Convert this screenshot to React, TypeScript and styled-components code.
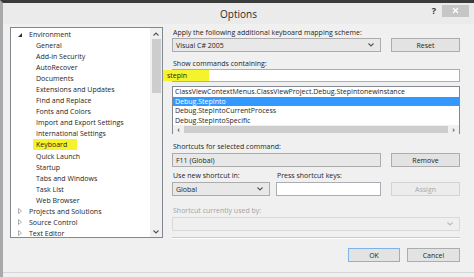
import styled, { createGlobalStyle } from "styled-components";

const GlobalStyle = createGlobalStyle`
  html, body {
    margin: 0;
    padding: 0;
    background: #8d8f91;
  }
  * {
    box-sizing: border-box;
  }
`;

const FONT = `"Open Sans", "Noto Sans", sans-serif`;

const Window = styled.div`
  width: 474px;
  height: 277px;
  display: flex;
  flex-direction: column;
  border-top: 3px solid #3b3b3b;
  border-left: 3px solid #a7a9ab;
  background: #f0f0f0;
  font-family: ${FONT};
  font-size: 7px;
  color: #1e1e1e;
  overflow: hidden;
`;

const TitleBar = styled.div`
  height: 21px;
  display: flex;
  align-items: center;
  justify-content: center;
  position: relative;
  background: #ebebeb;
`;

const Title = styled.span`
  font-size: 10px;
  color: #2b2b2b;
  margin-top: 1px;
`;

const TitleButtons = styled.div`
  position: absolute;
  right: 5px;
  top: 1px;
  display: flex;
  align-items: center;
  gap: 6px;
`;

const Help = styled.span`
  font-size: 9px;
  font-weight: 700;
  color: #333;
`;

const CloseBox = styled.div`
  width: 27px;
  height: 12px;
  background: #c6c6c6;
  display: flex;
  align-items: center;
  justify-content: center;
`;

const Body = styled.div`
  height: 249px;
  display: flex;
  padding: 3px 10px 0 7px;
  border-bottom: 1px solid #d6d6d6;
`;

const TreeBox = styled.div`
  width: 153px;
  height: 211px;
  border: 1px solid #828790;
  background: #fff;
  display: flex;
`;

const TreeList = styled.div`
  flex: 1;
  padding-top: 1px;
  overflow: hidden;
`;

const TreeRow = styled.div<{ $level: number; $mark?: boolean }>`
  height: 11.05px;
  line-height: 11px;
  display: flex;
  align-items: center;
  padding-left: ${(p) => (p.$level === 0 ? 5 : 25)}px;
  white-space: nowrap;
  span {
    padding: ${(p) => (p.$mark ? "0 10px 0 3px" : "0")};
    margin-left: ${(p) => (p.$mark ? "-3px" : "0")};
    background: ${(p) => (p.$mark ? "#f4f32c" : "transparent")};
  }
`;

const Twisty = styled.svg`
  width: 8px;
  height: 8px;
  margin-right: 5px;
  flex-shrink: 0;
`;

const VScroll = styled.div`
  width: 12px;
  background: #f0f0f0;
  display: flex;
  flex-direction: column;
  align-items: center;
`;

const ScrollArrow = styled.div`
  height: 11px;
  width: 100%;
  display: flex;
  align-items: center;
  justify-content: center;
`;

const VThumb = styled.div`
  width: 9px;
  height: 54px;
  background: #cdcdcd;
`;

const Spacer = styled.div`
  flex: 1;
`;

const Right = styled.div`
  width: 288px;
  margin-left: 9px;
  display: flex;
  flex-direction: column;
`;

const Label = styled.div<{ $top: number; $disabled?: boolean }>`
  height: 10px;
  line-height: 10px;
  margin-top: ${(p) => p.$top}px;
  padding-left: 1px;
  white-space: nowrap;
  color: ${(p) => (p.$disabled ? "#a3a3a3" : "#1e1e1e")};
`;

const Row = styled.div<{ $top?: number }>`
  display: flex;
  gap: 10px;
  margin-top: ${(p) => p.$top ?? 0}px;
  align-items: flex-start;
`;

const Combo = styled.div<{ $w?: number; $grow?: boolean; $disabled?: boolean; $top?: number }>`
  ${(p) => (p.$w ? `width: ${p.$w}px;` : "")}
  ${(p) => (p.$grow ? "flex: 1;" : "")}
  height: 14px;
  flex-shrink: 0;
  margin-top: ${(p) => p.$top ?? 0}px;
  border: 1px solid ${(p) => (p.$disabled ? "#d9d9d9" : "#acacac")};
  background: ${(p) => (p.$disabled ? "#efefef" : "#e8e8e8")};
  display: flex;
  align-items: center;
  padding-left: 3px;
  color: #1e1e1e;
`;

const ComboText = styled.span`
  flex: 1;
`;

const Chevron = styled.svg`
  width: 6px;
  height: 4px;
  margin-right: 6px;
`;

const Button = styled.div<{ $w: number; $default?: boolean; $disabled?: boolean; $top?: number }>`
  width: ${(p) => p.$w}px;
  height: 14px;
  margin-top: ${(p) => p.$top ?? 0}px;
  border: 1px solid
    ${(p) => (p.$default ? "#7eb4ea" : p.$disabled ? "#d3d3d3" : "#adadad")};
  background: ${(p) => (p.$disabled ? "#ececec" : "#e3e3e3")};
  color: ${(p) => (p.$disabled ? "#a8a8a8" : "#1e1e1e")};
  display: flex;
  align-items: center;
  justify-content: center;
`;

const TextBox = styled.div<{ $w?: number; $h?: number; $top?: number }>`
  ${(p) => (p.$w ? `width: ${p.$w}px;` : "")}
  height: ${(p) => p.$h ?? 14}px;
  margin-top: ${(p) => p.$top ?? 0}px;
  border: 1px solid #abadb3;
  background: #fff;
  display: flex;
  align-items: center;
`;

const Highlight = styled.span`
  background: #f4f32c;
  padding: 1px 22px 1px 4px;
  margin-left: -10px;
  line-height: 9px;
`;

const ListBox = styled.div`
  margin-top: 4px;
  height: 48px;
  border: 1px solid #828790;
  background: #fff;
  display: flex;
  flex-direction: column;
`;

const ListItem = styled.div<{ $selected?: boolean }>`
  height: 9.5px;
  line-height: 9.5px;
  padding-left: 2px;
  white-space: nowrap;
  background: ${(p) => (p.$selected ? "#3399ff" : "transparent")};
  color: ${(p) => (p.$selected ? "#fff" : "#1e1e1e")};
`;

const HScroll = styled.div`
  margin-top: auto;
  height: 9px;
  background: #f0f0f0;
  display: flex;
  align-items: center;
`;

const HThumb = styled.div`
  flex: 1;
  height: 7px;
  background: #cdcdcd;
`;

const HArrow = styled.div`
  width: 11px;
  text-align: center;
  font-size: 7px;
  font-weight: 700;
  color: #555;
  line-height: 9px;
`;

const ShortcutCol = styled.div<{ $w: number; $shift?: number }>`
  width: ${(p) => p.$w}px;
  margin-left: ${(p) => p.$shift ?? 0}px;
  display: flex;
  flex-direction: column;
`;

const Separator = styled.div`
  margin-top: 6px;
  height: 2px;
  border-top: 1px solid #c9c9c9;
  border-bottom: 1px solid #fff;
`;

const Footer = styled.div`
  margin-top: 9px;
  display: flex;
  justify-content: flex-end;
  gap: 7px;
`;

const tree: { label: string; level: number; mark?: boolean }[] = [
  { label: "Environment", level: 0 },
  { label: "General", level: 1 },
  { label: "Add-in Security", level: 1 },
  { label: "AutoRecover", level: 1 },
  { label: "Documents", level: 1 },
  { label: "Extensions and Updates", level: 1 },
  { label: "Find and Replace", level: 1 },
  { label: "Fonts and Colors", level: 1 },
  { label: "Import and Export Settings", level: 1 },
  { label: "International Settings", level: 1 },
  { label: "Keyboard", level: 1, mark: true },
  { label: "Quick Launch", level: 1 },
  { label: "Startup", level: 1 },
  { label: "Tabs and Windows", level: 1 },
  { label: "Task List", level: 1 },
  { label: "Web Browser", level: 1 },
  { label: "Projects and Solutions", level: 0 },
  { label: "Source Control", level: 0 },
  { label: "Text Editor", level: 0 },
];

const commands = [
  "ClassViewContextMenus.ClassViewProject.Debug.StepIntonewinstance",
  "Debug.StepInto",
  "Debug.StepIntoCurrentProcess",
  "Debug.StepIntoSpecific",
];

const Down = ({ color = "#555" }: { color?: string }) => (
  <Chevron viewBox="0 0 6 4">
    <path d="M0.5 0.5 L3 3 L5.5 0.5" fill="none" stroke={color} strokeWidth="1.1" />
  </Chevron>
);

const App = () => {
  return (
    <>
      <GlobalStyle />
      <Window>
        <TitleBar>
          <Title>Options</Title>
          <TitleButtons>
            <Help>?</Help>
            <CloseBox>
              <svg width="7" height="7" viewBox="0 0 7 7">
                <path d="M1 1 L6 6 M6 1 L1 6" stroke="#fff" strokeWidth="1.3" />
              </svg>
            </CloseBox>
          </TitleButtons>
        </TitleBar>
        <Body>
          <TreeBox>
            <TreeList>
              {tree.map((t) => (
                <TreeRow key={t.label} $level={t.level} $mark={t.mark}>
                  {t.level === 0 &&
                    (t.label === "Environment" ? (
                      <Twisty viewBox="0 0 8 8">
                        <path d="M6 2 L6 6 L2 6 Z" fill="#333" />
                      </Twisty>
                    ) : (
                      <Twisty viewBox="0 0 8 8">
                        <path d="M2.5 1.5 L5.5 4 L2.5 6.5 Z" fill="none" stroke="#a6a6a6" strokeWidth="0.9" />
                      </Twisty>
                    ))}
                  <span>{t.label}</span>
                </TreeRow>
              ))}
            </TreeList>
            <VScroll>
              <ScrollArrow>
                <svg width="6" height="4" viewBox="0 0 6 4">
                  <path d="M0.5 3.5 L3 1 L5.5 3.5" fill="none" stroke="#555" strokeWidth="1.1" />
                </svg>
              </ScrollArrow>
              <VThumb />
              <Spacer />
              <ScrollArrow>
                <svg width="6" height="4" viewBox="0 0 6 4">
                  <path d="M0.5 0.5 L3 3 L5.5 0.5" fill="none" stroke="#555" strokeWidth="1.1" />
                </svg>
              </ScrollArrow>
            </VScroll>
          </TreeBox>
          <Right>
            <Label $top={1}>Apply the following additional keyboard mapping scheme:</Label>
            <Row>
              <Combo $grow>
                <ComboText>Visual C# 2005</ComboText>
                <Down />
              </Combo>
              <Button $w={69}>Reset</Button>
            </Row>
            <Label $top={7}>Show commands containing:</Label>
            <TextBox $h={13}>
              <Highlight>stepin</Highlight>
            </TextBox>
            <ListBox>
              {commands.map((c, i) => (
                <ListItem key={c} $selected={i === 1}>
                  {c}
                </ListItem>
              ))}
              <HScroll>
                <HArrow>‹</HArrow>
                <HThumb />
                <HArrow>›</HArrow>
              </HScroll>
            </ListBox>
            <Label $top={8}>Shortcuts for selected command:</Label>
            <Row $top={1}>
              <Combo $grow>
                <ComboText>F11 (Global)</ComboText>
              </Combo>
              <Button $w={69}>Remove</Button>
            </Row>
            <Row $top={4}>
              <ShortcutCol $w={98}>
                <Label $top={0}>Use new shortcut in:</Label>
                <Combo $w={98} $top={1}>
                  <ComboText>Global</ComboText>
                  <Down />
                </Combo>
              </ShortcutCol>
              <ShortcutCol $w={105} $shift={-4}>
                <Label $top={0}>Press shortcut keys:</Label>
                <TextBox $w={105} $top={1} />
              </ShortcutCol>
              <ShortcutCol $w={69}>
                <Label $top={0}>&nbsp;</Label>
                <Button $w={69} $disabled $top={1}>
                  Assign
                </Button>
              </ShortcutCol>
            </Row>
            <Label $top={10} $disabled>
              Shortcut currently used by:
            </Label>
            <Combo $disabled $top={1}>
              <ComboText />
              <Down color="#bbb" />
            </Combo>
            <Separator />
            <Footer>
              <Button $w={52} $default>
                OK
              </Button>
              <Button $w={53}>Cancel</Button>
            </Footer>
          </Right>
        </Body>
      </Window>
    </>
  );
};

export default App;
